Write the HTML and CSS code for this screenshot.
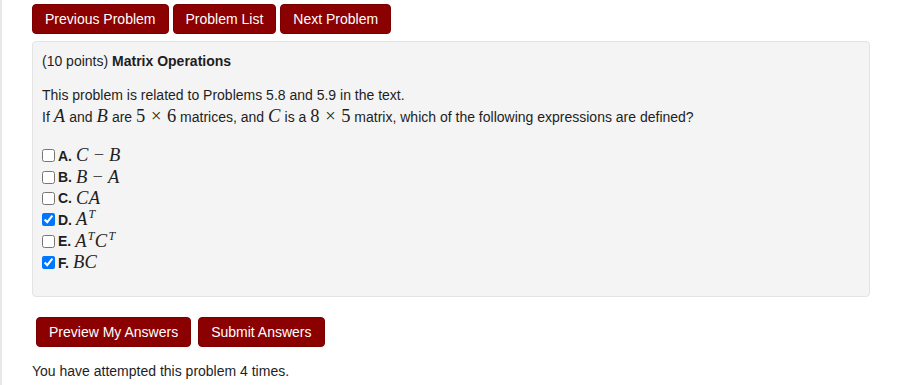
FILE: index.html
```html
<!DOCTYPE html>
<html>
<head>
<meta charset="utf-8">
<link rel="stylesheet" href="styles.css">
</head>
<body>
<div class="page">
  <div class="nav">
    <button class="btn">Previous Problem</button>
    <button class="btn">Problem List</button>
    <button class="btn">Next Problem</button>
  </div>
  <div class="well">
    <div class="title">(10 points) <b>Matrix Operations</b></div>
    <div class="text">
      <div class="line">This problem is related to Problems 5.8 and 5.9 in the text.</div>
      <div class="line">If <span class="mi">A</span> and <span class="mi">B</span> are <span class="mn">5 × 6</span> matrices, and <span class="mi">C</span> is a <span class="mn">8 × 5</span> matrix, which of the following expressions are defined?</div>
    </div>
    <div class="choices">
      <label class="choice"><input type="checkbox"><b>A.</b> <span class="mi">C</span><span class="mo">−</span><span class="mi">B</span></label>
      <label class="choice"><input type="checkbox"><b>B.</b> <span class="mi">B</span><span class="mo">−</span><span class="mi">A</span></label>
      <label class="choice"><input type="checkbox"><b>C.</b> <span class="mi">CA</span></label>
      <label class="choice"><input type="checkbox" checked><b>D.</b> <span class="mi">A<sup class="sup">T</sup></span></label>
      <label class="choice"><input type="checkbox"><b>E.</b> <span class="mi">A<sup class="sup">T</sup>C<sup class="sup">T</sup></span></label>
      <label class="choice"><input type="checkbox" checked><b>F.</b> <span class="mi">BC</span></label>
    </div>
  </div>
  <div class="actions">
    <button class="btn">Preview My Answers</button>
    <button class="btn">Submit Answers</button>
  </div>
  <div class="attempts">You have attempted this problem 4 times.</div>
</div>
</body>
</html>
```
FILE: styles.css
```css
html, body {
  margin: 0;
  padding: 0;
  background: #fff;
}
body {
  font-family: "Liberation Sans", Arial, sans-serif;
  font-size: 14px;
  color: #1e1e1e;
}
.page {
  border-left: 2px solid #e8e8e8;
  margin-left: 0;
  min-height: 385px;
  box-sizing: border-box;
  padding: 4px 0 0 30px;
}
.nav {
  display: flex;
  gap: 4px;
}
.btn {
  font-family: "Liberation Sans", Arial, sans-serif;
  font-size: 14px;
  color: #fff;
  background: #8b0000;
  border: 1px solid #7a0000;
  border-radius: 4px;
  height: 30px;
  padding: 0 12px;
  margin: 0;
  line-height: 28px;
}
.well {
  margin-top: 7px;
  width: 838px;
  box-sizing: border-box;
  height: 256px;
  background: #f4f4f4;
  border: 1px solid #e3e3e3;
  border-radius: 4px;
  padding: 9px 9px;
}
.title {
  line-height: 20px;
}
.text {
  margin-top: 14px;
}
.line {
  line-height: 21px;
}
.mi {
  font-family: "Liberation Serif", "Times New Roman", serif;
  font-style: italic;
  font-size: 18.5px;
  letter-spacing: 0.3px;
}
.mn {
  font-family: "Liberation Serif", "Times New Roman", serif;
  font-size: 18.5px;
  word-spacing: 1px;
}
.mo {
  font-family: "Liberation Serif", "Times New Roman", serif;
  font-size: 18.5px;
  margin: 0 5px;
}
.sup {
  font-size: 12px;
  vertical-align: 7px;
  line-height: 0;
  margin-left: 1px;
}
.choices {
  margin-top: 17px;
  display: flex;
  flex-direction: column;
}
.choice {
  display: flex;
  align-items: center;
  height: 21.4px;
}
.choice input {
  margin: 0 3px 0 0;
  width: 13px;
  height: 13px;
}
.choice b {
  margin-right: 4px;
}
.actions {
  display: flex;
  gap: 7px;
  margin: 20px 0 0 4px;
}
.attempts {
  margin-top: 14px;
  line-height: 20px;
}
```
